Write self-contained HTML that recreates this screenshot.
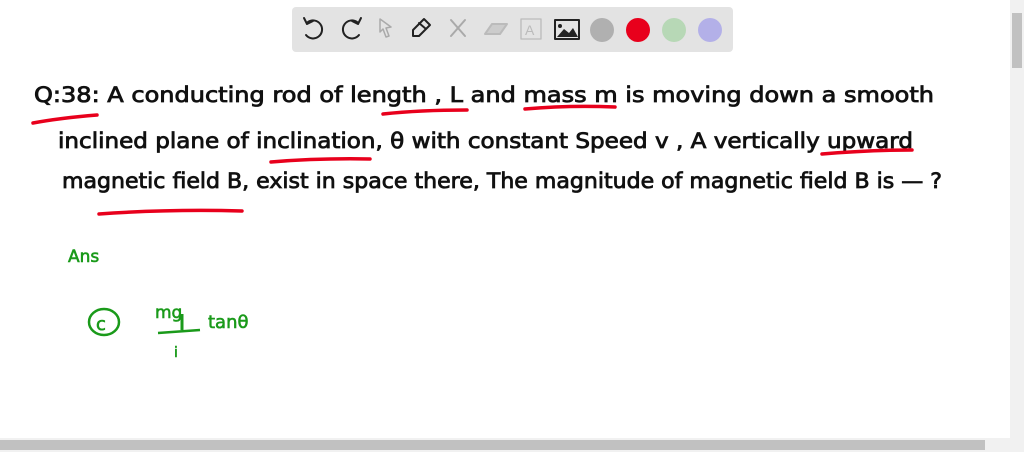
<!DOCTYPE html>
<html><head><meta charset="utf-8"><style>
html,body{margin:0;padding:0;background:#fff;width:1024px;height:452px;overflow:hidden;position:relative;font-family:"Liberation Sans",sans-serif}
.tb{position:absolute;left:292px;top:7px;width:441px;height:45px;background:#e3e3e3;border-radius:4px}
.vs{position:absolute;left:1010px;top:0;width:14px;height:438px;background:#f1f1f1}
.vt{position:absolute;left:1012px;top:13px;width:10px;height:55px;background:#c1c1c1}
.hs{position:absolute;left:0;top:438px;width:1024px;height:14px;background:#f1f1f1}
.ht{position:absolute;left:0;top:440px;width:985px;height:10px;background:#c1c1c1}
</style></head><body>
<div class="tb"></div>
<svg width="1024" height="452" style="position:absolute;left:0;top:0">
<g fill="none" stroke="#222" stroke-width="2" stroke-linecap="round" stroke-linejoin="round">
<path d="M308 22 A9 9 0 1 1 306 35"/><path d="M304 18 L307 24 L313 21"/>
<path d="M357 22 A9 9 0 1 0 359 35"/><path d="M361 18 L358 24 L352 21"/>
<path d="M380 19 L391 27 L386 28 L389 36 L386 37 L383 29 L380 32 Z" stroke="#aaa" stroke-width="1.5"/>
<path d="M413 36 L413 30 L424 19 L430 25 L419 36 Z M419 23 L426 29"/>
<path d="M451 20 L465 36 M465 20 L451 36" stroke="#aaa"/>
<path d="M485 34 L492 24 L507 24 L500 34 Z" stroke="#bbb" fill="#ccc"/>
<rect x="521" y="19" width="20" height="20" stroke="#bbb" stroke-width="1.3"/>
<rect x="555" y="20" width="24" height="19" stroke-width="2"/>
</g>
<text x="525" y="35" font-size="14" fill="#bbb">A</text>
<circle cx="560" cy="26" r="2" fill="#222"/><path d="M557 37 L564 29 L569 33 L573 28 L578 37 Z" fill="#222"/>
<circle cx="602" cy="30" r="12" fill="#b0b0b0"/>
<circle cx="638" cy="30" r="12" fill="#e8001c"/>
<circle cx="674" cy="30" r="12" fill="#b7d8b6"/>
<circle cx="710" cy="30" r="12" fill="#b3b0e8"/>
<g font-family="DejaVu Sans,sans-serif" fill="#111" stroke="#111" stroke-width="0.8" font-size="21">
<text x="34" y="102" textLength="900" lengthAdjust="spacingAndGlyphs">Q:38:  A  conducting  rod  of  length , L  and  mass m  is  moving  down  a  smooth</text>
<text x="58" y="148" textLength="855" lengthAdjust="spacingAndGlyphs">inclined  plane  of  inclination, θ  with  constant  Speed  v ,  A  vertically  upward</text>
<text x="62" y="188" textLength="880" lengthAdjust="spacingAndGlyphs">magnetic   field  B, exist  in  space  there, The  magnitude  of  magnetic  field  B is  — ?</text>
</g>
<g fill="none" stroke="#e8001c" stroke-width="3.5" stroke-linecap="round">
<path d="M33 123 Q60 118 97 115"/><path d="M383 114 Q420 110 467 110"/><path d="M525 109 Q570 105 615 107"/>
<path d="M271 162 Q320 158 370 159"/><path d="M822 154 Q870 150 912 150"/><path d="M99 214 Q170 209 242 211"/>
</g>
<g fill="#1a9a1a" stroke="#1a9a1a" font-family="DejaVu Sans,sans-serif">
<text x="68" y="262" font-size="17" stroke-width="0.6">Ans</text>
<ellipse cx="104" cy="322" rx="15" ry="13" fill="none" stroke-width="2.5"/>
<text x="96" y="330" font-size="18" stroke-width="0.6">c</text>
<text x="155" y="318" font-size="17" stroke-width="0.6">mg</text>
<path d="M158 333 L200 330" stroke-width="2.5"/><path d="M182 314 L182 330" stroke-width="3"/>
<text x="174" y="357" font-size="14" stroke-width="0.5">i</text>
<text x="208" y="328" font-size="18" stroke-width="0.6">tanθ</text>
</g>
</svg>
<div class="vs"></div><div class="vt"></div>
<div class="hs"></div><div class="ht"></div>
</body></html>
